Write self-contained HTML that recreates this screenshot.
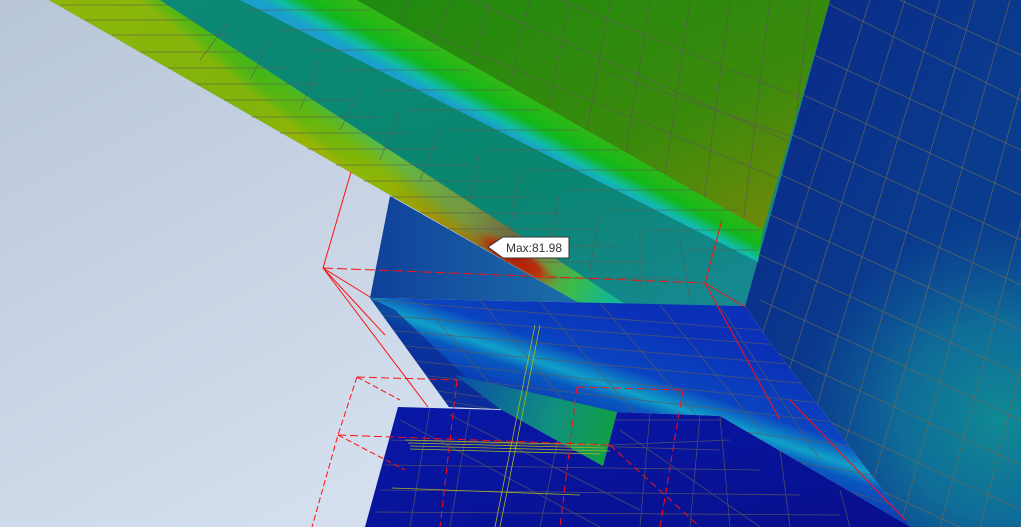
<!DOCTYPE html>
<html><head><meta charset="utf-8"><style>
html,body{margin:0;padding:0;width:1021px;height:527px;overflow:hidden;background:#d0dcec}
svg{display:block;position:absolute;left:0;top:0}
</style></head><body>
<svg width="1021" height="527" viewBox="0 0 1021 527" xmlns="http://www.w3.org/2000/svg">
<defs>
<linearGradient id="bg" x1="0" y1="0" x2="1" y2="1">
<stop offset="0" stop-color="#b9c6d8"/><stop offset="0.6" stop-color="#d2dded"/><stop offset="1" stop-color="#dfe8f6"/></linearGradient>
<linearGradient id="right" gradientUnits="userSpaceOnUse" x1="800" y1="0" x2="1000" y2="120">
<stop offset="0" stop-color="#0a2a88"/><stop offset="1" stop-color="#0a3c8e"/></linearGradient>
<radialGradient id="tealspot" gradientUnits="userSpaceOnUse" cx="1000" cy="420" r="200">
<stop offset="0" stop-color="#108a94"/><stop offset="0.5" stop-color="#10789a" stop-opacity="0.8"/><stop offset="1" stop-color="#10609a" stop-opacity="0"/></radialGradient>
<linearGradient id="green" x1="0" y1="0" x2="1" y2="1">
<stop offset="0" stop-color="#1f8a10"/><stop offset="0.6" stop-color="#3a8a0c"/><stop offset="1" stop-color="#7a8a08"/></linearGradient>
<linearGradient id="bevel" gradientUnits="userSpaceOnUse" x1="560" y1="115" x2="540" y2="152">
<stop offset="0" stop-color="#30b814"/><stop offset="0.5" stop-color="#12b81c"/><stop offset="0.8" stop-color="#10bca8"/><stop offset="1" stop-color="#1aa0cc"/></linearGradient>
<linearGradient id="teal" x1="0" y1="0" x2="1" y2="1">
<stop offset="0" stop-color="#0c8a78"/><stop offset="0.6" stop-color="#0a8670"/><stop offset="1" stop-color="#188898"/></linearGradient>
<linearGradient id="strip" gradientUnits="userSpaceOnUse" x1="49" y1="0" x2="605" y2="304">
<stop offset="0" stop-color="#70b812"/><stop offset="0.35" stop-color="#50b414"/><stop offset="0.6" stop-color="#a8b400"/><stop offset="0.74" stop-color="#c87800"/><stop offset="0.82" stop-color="#c02000"/><stop offset="0.88" stop-color="#c86a00"/><stop offset="0.94" stop-color="#60b810"/><stop offset="1" stop-color="#18b090"/></linearGradient>
<linearGradient id="stripx" gradientUnits="userSpaceOnUse" x1="320" y1="150" x2="345" y2="120">
<stop offset="0" stop-color="#b8b400" stop-opacity="0.45"/><stop offset="0.5" stop-color="#10c020" stop-opacity="0.15"/><stop offset="1" stop-color="#10c090" stop-opacity="0.45"/></linearGradient>
<radialGradient id="hot" cx="0.5" cy="0.5" r="0.5">
<stop offset="0" stop-color="#c01000"/><stop offset="0.6" stop-color="#c02000" stop-opacity="0.8"/><stop offset="1" stop-color="#c06000" stop-opacity="0"/></radialGradient>
<linearGradient id="front" x1="0" y1="0" x2="1" y2="0">
<stop offset="0" stop-color="#10409a"/><stop offset="0.5" stop-color="#1a6aa8"/><stop offset="1" stop-color="#1a8a9c"/></linearGradient>
<linearGradient id="diag" gradientUnits="userSpaceOnUse" x1="600" y1="300" x2="560" y2="420">
<stop offset="0" stop-color="#0a30b8"/><stop offset="0.45" stop-color="#0a44c0"/><stop offset="0.62" stop-color="#10a0c8"/><stop offset="0.72" stop-color="#0a58c0"/><stop offset="1" stop-color="#0a30b0"/></linearGradient>
<linearGradient id="bev2" gradientUnits="userSpaceOnUse" x1="455" y1="390" x2="617" y2="440">
<stop offset="0" stop-color="#0a50a8"/><stop offset="0.6" stop-color="#10907e"/><stop offset="1" stop-color="#10a040"/></linearGradient>
<linearGradient id="dark" x1="0" y1="0" x2="1" y2="1">
<stop offset="0" stop-color="#0818a8"/><stop offset="1" stop-color="#080f8c"/></linearGradient>
<clipPath id="cS"><polygon points="49,0 160,0 625,304 581,304"/></clipPath>
<clipPath id="cR"><polygon points="830,0 1021,0 1021,527 911,527 768,340 745,306"/></clipPath>
<clipPath id="cG"><polygon points="357,0 830,0 763,230"/></clipPath>
<clipPath id="cD"><polygon points="720,416 911,527 365,527 398,407 502,410 603,466 617,412"/></clipPath>
<clipPath id="cDi"><polygon points="370,298 745,306 768,340 911,527 720,416 617,412 500,409 449,407"/></clipPath>
</defs>
<rect width="1021" height="527" fill="url(#bg)"/>

<polygon points="830,0 1021,0 1021,527 911,527 768,340 745,306" fill="url(#right)"/>
<polygon points="830,0 1021,0 1021,527 911,527 768,340 745,306" fill="url(#tealspot)"/>
<g clip-path="url(#cR)" stroke="#6a6a5a" stroke-width="0.8" fill="none" opacity="0.8">
<path d="M870,0 L700,527 M905,0 L740,527 M940,0 L780,527 M975,0 L820,527 M1010,0 L860,527 M1045,0 L900,527 M1080,0 L940,527 M1115,0 L980,527 M1150,0 L1020,527"/>
<path d="M760,30 L1021,150 M760,75 L1021,195 M760,120 L1021,240 M760,165 L1021,285 M760,210 L1021,330 M760,255 L1021,375 M760,300 L1021,420 M760,345 L1021,465 M760,390 L1021,510 M760,435 L1021,555 M820,0 L1021,100 M900,0 L1021,55"/>
</g>

<polygon points="390,196 581,304 745,306 370,298" fill="url(#front)"/>

<polygon points="49,0 830,0 745,306 581,304" fill="url(#teal)"/>
<polygon points="240,0 357,0 763,230 758,262" fill="url(#bevel)"/>
<polygon points="49,0 160,0 625,304 581,304" fill="url(#strip)"/>
<polygon points="49,0 160,0 625,304 581,304" fill="url(#stripx)"/>
<g clip-path="url(#cS)">
<ellipse cx="515" cy="258" rx="48" ry="14" transform="rotate(31 515 258)" fill="url(#hot)"/>
</g>
<polygon points="357,0 830,0 763,230" fill="url(#green)"/>
<g clip-path="url(#cG)" stroke="#5a5a50" stroke-width="0.8" fill="none" opacity="0.8">
<path d="M410,0 L380,60 M450,0 L420,80 M490,0 L460,105 M530,0 L500,125 M570,0 L540,150 M610,0 L580,170 M650,0 L620,190 M690,0 L660,210 M730,0 L700,230 M770,0 L740,250 M810,0 L780,250"/>
<path d="M560,0 L830,110 M470,0 L830,160 M420,30 L830,200 M600,70 L830,150 M700,200 L800,250"/>
</g>
<g stroke="#5a5a50" stroke-width="0.8" fill="none" opacity="0.75">
<path d="M60,5 L170,5 M85,20 L200,20 M112,35 L230,35 M140,52 L260,52 M168,68 L290,68 M196,84 L320,84 M224,100 L350,100 M252,117 L380,117 M280,133 L410,133 M308,149 L440,149 M336,165 L470,165 M364,181 L500,181 M392,197 L530,197 M420,213 L560,213 M448,229 L590,229 M476,246 L620,246 M504,262 L650,262 M532,278 L680,278"/>
<path d="M250,10 L370,10 M280,30 L400,30 M310,50 L440,50 M340,70 L470,70 M380,90 L510,90 M410,110 L540,110 M450,130 L580,130 M490,150 L620,150 M530,170 L660,170 M570,190 L700,190 M610,210 L740,210 M650,230 L760,230 M690,250 L757,250"/>
<path d="M230,20 L200,60 M270,40 L250,80 M320,60 L300,110 M360,90 L340,130 M400,110 L380,160 M440,130 L420,180 M480,150 L470,200 M520,170 L510,230 M560,190 L550,250 M600,210 L590,270 M640,230 L640,290 M680,240 L690,300"/>
</g>

<polygon points="370,298 745,306 768,340 911,527 720,416 617,412 500,409 449,407" fill="url(#diag)"/>
<polygon points="370,298 449,407 500,409 395,310" fill="#0a2a90" opacity="0.7"/>
<g clip-path="url(#cDi)" stroke="#5a5a60" stroke-width="0.8" fill="none" opacity="0.8">
<path d="M370,300 L760,330 M375,315 L780,345 M385,330 L800,365 M395,345 L820,385 M405,360 L840,405 M420,375 L860,425 M430,390 L880,450 M440,400 L900,480 M560,405 L911,510"/>
<path d="M420,300 L520,420 M480,300 L580,420 M540,302 L640,420 M600,303 L700,420 M660,305 L760,430 M720,306 L820,460"/>
</g>
<polygon points="455,375 617,412 603,466 500,409" fill="url(#bev2)"/>

<polygon points="720,416 911,527 365,527 398,407 502,410 603,466 617,412" fill="url(#dark)"/>
<g clip-path="url(#cD)" stroke="#5a5a60" stroke-width="0.8" fill="none" opacity="0.8">
<path d="M390,440 L720,450 M385,465 L760,470 M380,490 L800,495 M375,512 L840,515 M600,420 L720,420 M610,445 L730,440"/>
<path d="M430,407 L410,527 M470,410 L450,527 M560,430 L540,527 M650,413 L640,527 M700,415 L690,527 M720,416 L730,527 M780,450 L790,527 M840,490 L850,527"/>
<path d="M400,420 L600,527 M450,415 L640,510 M620,430 L760,527"/>
</g>
<g stroke="#a8b820" stroke-width="0.8" fill="none">
<path d="M405,440 L600,445 M408,443 L605,448 M410,446 L610,451 M410,449 L600,454 M392,488 L580,495 M535,325 L495,527 M540,325 L500,527"/>
</g>

<g stroke="#ff1010" stroke-width="1" fill="none">
<path d="M351,172 L323,268 L370,297 M323,268 L428,407 M323,268 L385,335"/>
<path d="M323,268 L705,283" stroke-dasharray="10,4"/>
<path d="M705,283 L722,220 M705,283 L745,307 M705,283 L780,420"/>
<path d="M357,377 L457,380 M338,435 L610,445 M577,387 L683,390" stroke-dasharray="8,4"/>
<path d="M357,377 L338,435 L312,527 M338,435 L405,470 M357,377 L400,400" stroke-dasharray="6,3"/>
<path d="M457,380 L440,527 M577,387 L560,527 M683,390 L660,527 M610,445 L700,527" stroke-dasharray="7,4"/>
<path d="M790,400 L905,520"/>
</g>

<polygon points="488,247 503,237 569,237 569,258 503,258" fill="#fff" stroke="#333" stroke-width="1"/>
<text x="506" y="252" font-family="Liberation Sans, sans-serif" font-size="12" fill="#333">Max:81.98</text>
</svg>
</body></html>
